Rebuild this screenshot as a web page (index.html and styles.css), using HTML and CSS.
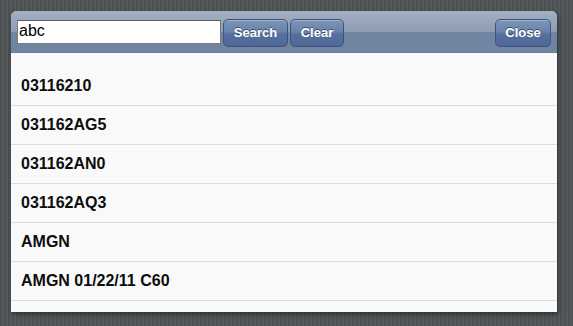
FILE: index.html
```html
<!DOCTYPE html>
<html>
<head>
<meta charset="utf-8">
<link rel="stylesheet" href="styles.css">
</head>
<body>
<div class="dialog">
  <div class="toolbar">
    <input class="search-input" type="text" value="abc">
    <button class="btn btn-search">Search</button>
    <button class="btn btn-clear">Clear</button>
    <div class="spacer"></div>
    <button class="btn btn-close">Close</button>
  </div>
  <ul class="results">
    <li class="row">03116210</li>
    <li class="row">031162AG5</li>
    <li class="row">031162AN0</li>
    <li class="row">031162AQ3</li>
    <li class="row">AMGN</li>
    <li class="row">AMGN 01/22/11 C60</li>
  </ul>
</div>
</body>
</html>
```
FILE: styles.css
```css
html, body {
  margin: 0;
  padding: 0;
  height: 100%;
}
body {
  background-color: #4f5457;
  background-image: repeating-linear-gradient(90deg, #4b5053 0px, #4b5053 2px, #55595c 2px, #55595c 4px);
  font-family: "Liberation Sans", Arial, sans-serif;
  padding: 11px 16px 0 11px;
  box-sizing: border-box;
}
.dialog {
  width: 546px;
  height: 301px;
  background: #f9f9f9;
  border-radius: 6px 6px 0 0;
  overflow: hidden;
  box-shadow: 1px 2px 4px rgba(0,0,0,0.45);
  display: flex;
  flex-direction: column;
}
.toolbar {
  height: 42px;
  flex: none;
  box-sizing: border-box;
  display: flex;
  align-items: center;
  padding: 0 6px 0 6px;
  background: linear-gradient(to bottom, #a3b0c3 0%, #8e9db4 50%, #7285a3 50%, #7083a1 100%);
  border-bottom: 1px solid #6a7d9b;
}
.search-input {
  width: 204px;
  height: 24px;
  box-sizing: border-box;
  margin: 0 2px 0 0;
  border: 1px solid #7b7b7b;
  border-top-color: #5e5e5e;
  background: #fff;
  font-family: "Liberation Sans", Arial, sans-serif;
  font-size: 16px;
  color: #000;
  padding: 0 1px 1px 1px;
  outline: none;
}
.btn {
  height: 28px;
  margin-top: 2px;
  box-sizing: border-box;
  border: 1px solid #3f5476;
  border-radius: 5px;
  background: linear-gradient(to bottom, #7e95b8 0%, #6882a9 45%, #56709c 55%, #4d6899 100%);
  box-shadow: inset 0 1px 0 rgba(255,255,255,0.25);
  color: #fff;
  font-family: "Liberation Sans", Arial, sans-serif;
  font-weight: bold;
  font-size: 13px;
  text-shadow: 0 -1px 0 rgba(0,0,0,0.45);
  padding: 0;
  cursor: pointer;
}
.btn-search {
  width: 65px;
}
.btn-clear {
  width: 54px;
  margin-left: 2px;
}
.spacer {
  flex: 1;
}
.btn-close {
  width: 56px;
}
.results {
  list-style: none;
  margin: 0;
  padding: 14px 0 0 0;
  flex: 1;
  overflow: hidden;
}
.row {
  height: 38px;
  line-height: 38px;
  border-bottom: 1px solid #dcdcdc;
  padding-left: 10px;
  font-weight: bold;
  font-size: 16px;
  color: #0d0d0d;
}
```
